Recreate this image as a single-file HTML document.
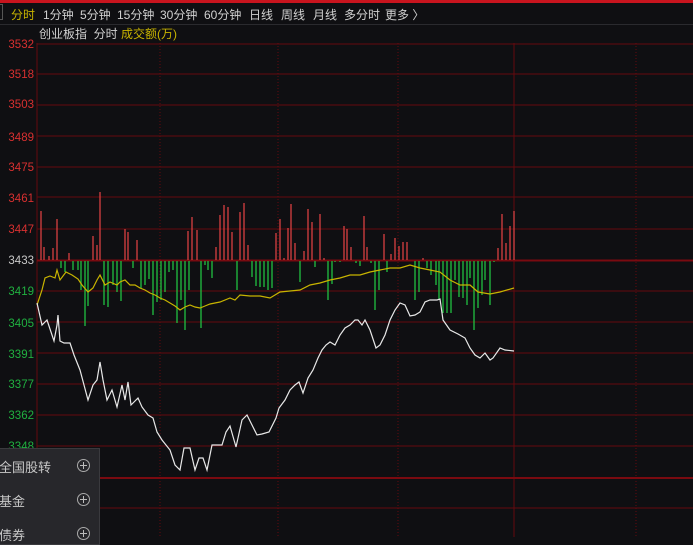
<!DOCTYPE html>
<html><head><meta charset="utf-8"><style>
html,body{margin:0;padding:0;background:#0f0f12;width:693px;height:537px;overflow:hidden;font-family:"Liberation Sans","Noto Sans CJK SC",sans-serif}
.top{position:absolute;left:0;top:0;width:693px;height:3px;background:#c8141e}
.tb{position:absolute;left:0;top:3px;width:693px;height:21px;border-bottom:1px solid #2a2a2e;font-size:12px;color:#d0d0d0}
.tb span{position:absolute;top:3px}
.menu{position:absolute;left:-2px;top:448px;width:100px;height:95px;background:#27272b;border:1px solid #3a3a3e;color:#c8c8c8;font-size:13px}
.menu div{position:absolute;left:0}
.plus{position:absolute;left:78px;width:11px;height:11px;border:1px solid #aaa;border-radius:50%}
.plus:before{content:"";position:absolute;left:2px;top:5px;width:7px;height:1px;background:#bbb}
.plus:after{content:"";position:absolute;left:5px;top:2px;width:1px;height:7px;background:#bbb}
</style></head><body>
<div class="top"></div>
<div class="tb">
<span style="left:-3px;top:1px;width:4px;height:14px;border:1px solid #555"></span>
<span style="left:11px;color:#c8b400">分时</span><span style="left:43px">1分钟</span><span style="left:80px">5分钟</span><span style="left:117px">15分钟</span><span style="left:160px">30分钟</span><span style="left:204px">60分钟</span><span style="left:249px">日线</span><span style="left:281px">周线</span><span style="left:313px">月线</span><span style="left:344px">多分时</span><span style="left:385px">更多 〉</span>
</div>
<div style="position:absolute;left:39px;top:25px;font-size:12px;color:#d0d0d0">创业板指&nbsp;&nbsp;分时 <span style="color:#c8b400">成交额(万)</span></div>
<svg width="693" height="537" style="position:absolute;left:0;top:0" xmlns="http://www.w3.org/2000/svg">
<g font-size="11.5" font-family="Liberation Sans" text-anchor="end">
<text x="34" y="48" fill="#d83030">3532</text><text x="34" y="78" fill="#d83030">3518</text><text x="34" y="108" fill="#d83030">3503</text><text x="34" y="141" fill="#d83030">3489</text><text x="34" y="171" fill="#d83030">3475</text><text x="34" y="202" fill="#d83030">3461</text><text x="34" y="233" fill="#d83030">3447</text><text x="34" y="264" fill="#c8c8c8">3433</text><text x="34" y="295" fill="#20b040">3419</text><text x="34" y="327" fill="#20b040">3405</text><text x="34" y="358" fill="#20b040">3391</text><text x="34" y="388" fill="#20b040">3377</text><text x="34" y="419" fill="#20b040">3362</text><text x="34" y="450" fill="#20b040">3348</text>
</g>
<g stroke="#640a0e" stroke-width="1">
<line x1="37" y1="43" x2="37" y2="537"/>
<line x1="37" y1="44" x2="693" y2="44"/><line x1="37" y1="74" x2="693" y2="74"/><line x1="37" y1="105" x2="693" y2="105"/><line x1="37" y1="136" x2="693" y2="136"/><line x1="37" y1="167" x2="693" y2="167"/><line x1="37" y1="197" x2="693" y2="197"/><line x1="37" y1="229" x2="693" y2="229"/><line x1="37" y1="291" x2="693" y2="291"/><line x1="37" y1="322" x2="693" y2="322"/><line x1="37" y1="353" x2="693" y2="353"/><line x1="37" y1="384" x2="693" y2="384"/><line x1="37" y1="415" x2="693" y2="415"/><line x1="37" y1="446" x2="693" y2="446"/><line x1="37" y1="508" x2="693" y2="508"/>
<line x1="514" y1="43" x2="514" y2="537"/>
</g>
<g stroke="#640a0e" stroke-dasharray="1,2"><line x1="160" y1="43" x2="160" y2="537"/><line x1="278" y1="43" x2="278" y2="537"/><line x1="398" y1="43" x2="398" y2="537"/><line x1="636" y1="43" x2="636" y2="537"/></g>
<line x1="37" y1="260.5" x2="693" y2="260.5" stroke="#7a0a10" stroke-width="2"/>
<line x1="37" y1="478" x2="693" y2="478" stroke="#7a0a10" stroke-width="2"/>
<g stroke="#d84040" stroke-width="1.3">
<path d="M41 260V211M44 260V247M49 260V256M53 260V248M57 260V219M69 260V253M93 260V236M97 260V245M100 260V192M125 260V229M128 260V232M137 260V240M188 260V231M192 260V217M197 260V230M216 260V247M220 260V215M224 260V205M228 260V207M232 260V232M240 260V212M244 260V203M248 260V245M276 260V233M280 260V219M284 260V258M288 260V228M291 260V204M295 260V243M304 260V251M308 260V209M312 260V222M320 260V214M324 260V258M344 260V226M347 260V229M351 260V247M364 260V216M367 260V247M384 260V234M391 260V254M395 260V238M399 260V246M403 260V242M407 260V242M423 260V258M498 260V248M502 260V214M506 260V243M510 260V226M514 260V211"/>
</g>
<g stroke="#20c040" stroke-width="1.3">
<path d="M61 261V268M65 261V272M73 261V270M78 261V270M81 261V290M85 261V326M88 261V306M104 261V305M108 261V307M113 261V285M117 261V292M121 261V301M133 261V268M141 261V288M145 261V285M149 261V279M153 261V315M157 261V302M161 261V300M165 261V292M169 261V272M173 261V270M177 261V323M181 261V300M185 261V330M189 261V290M201 261V328M205 261V265M208 261V270M212 261V278M237 261V290M252 261V277M256 261V286M260 261V287M264 261V287M268 261V290M272 261V288M300 261V282M315 261V267M328 261V300M332 261V284M335 261V262M340 261V262M356 261V263M360 261V266M371 261V263M375 261V310M379 261V290M387 261V272M415 261V300M419 261V292M427 261V268M431 261V275M436 261V285M439 261V300M443 261V313M447 261V313M451 261V313M455 261V280M459 261V297M463 261V298M467 261V305M470 261V278M474 261V330M478 261V308M482 261V295M485 261V280M490 261V305M494 261V262"/>
</g>
<polyline fill="none" stroke="#c8b400" stroke-width="1.2" points="37,305 42,290 45,278 50,276 55,278 57,270 60,280 66,272 72,275 78,279 82,285 88,292 93,288 97,280 100,275 105,285 110,282 117,285 120,282 125,280 130,285 135,285 140,288 145,290 150,293 155,295 160,298 165,300 170,303 175,306 180,310 185,307 190,305 195,307 200,308 205,306 210,304 220,302 230,298 235,300 240,295 250,296 260,296 270,298 280,292 290,291 300,290 310,285 320,283 330,280 340,278 350,275 360,275 370,272 380,270 390,268 400,268 410,265 420,268 430,270 440,272 445,276 450,280 460,285 470,285 478,292 490,294 500,292 514,288"/>
<polyline fill="none" stroke="#e8e8e8" stroke-width="1.2" points="37,303 42,325 47,320 52,335 54,341 57,325 58,315 60,341 64,343 70,343 74,355 80,370 88,400 93,385 97,380 100,362 103,380 107,400 112,390 117,407 122,385 125,400 128,382 131,405 138,398 142,407 148,415 153,418 157,432 162,440 170,450 175,465 180,470 184,448 190,448 195,470 199,458 203,458 207,470 212,445 222,445 226,432 230,426 236,447 242,420 247,415 252,425 257,435 262,434 269,432 276,418 279,408 285,400 290,390 295,385 299,382 303,393 308,378 313,370 318,358 322,350 326,345 330,342 335,345 340,335 345,328 350,325 355,320 358,320 362,325 365,320 370,330 376,348 380,345 385,335 390,320 395,310 400,303 405,305 410,316 415,315 420,312 425,302 430,300 437,300 440,299 443,320 450,330 458,334 465,338 470,348 475,355 480,358 485,353 490,360 493,358 500,348 505,350 514,351"/>
</svg>
<div class="menu">
<div style="top:8px">全国股转</div><span class="plus" style="top:10px"></span>
<div style="top:42px">基金</div><span class="plus" style="top:44px"></span>
<div style="top:76px">债券</div><span class="plus" style="top:78px"></span>
</div>
</body></html>
